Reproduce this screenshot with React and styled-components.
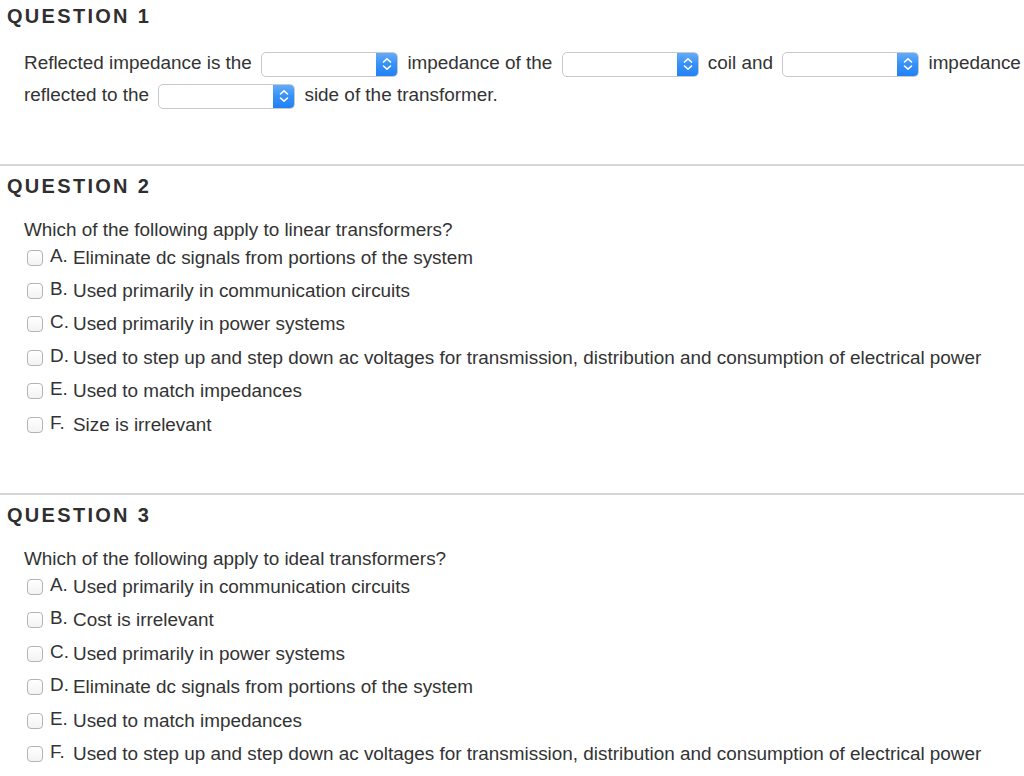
import React from "react";
import styled, { createGlobalStyle } from "styled-components";

const questions = [
  {
    id: 2,
    prompt: "Which of the following apply to linear transformers?",
    options: [
      "Eliminate dc signals from portions of the system",
      "Used primarily in communication circuits",
      "Used primarily in power systems",
      "Used to step up and step down ac voltages for transmission, distribution and consumption of electrical power",
      "Used to match impedances",
      "Size is irrelevant",
    ],
  },
  {
    id: 3,
    prompt: "Which of the following apply to ideal transformers?",
    options: [
      "Used primarily in communication circuits",
      "Cost is irrelevant",
      "Used primarily in power systems",
      "Eliminate dc signals from portions of the system",
      "Used to match impedances",
      "Used to step up and step down ac voltages for transmission, distribution and consumption of electrical power",
    ],
  },
];

const Dropdown = () => (
  <SelectBox>
    <SelectField />
    <SelectArrow>
      <svg width="10" height="14" viewBox="0 0 10 14">
        <path d="M1.5 5 L5 1.8 L8.5 5 M1.5 9 L5 12.2 L8.5 9" fill="none" stroke="#fff" strokeWidth="1.6" strokeLinecap="round" strokeLinejoin="round" />
      </svg>
    </SelectArrow>
  </SelectBox>
);

const App = () => (
  <>
    <GlobalStyle />
    <Page>
      <Question>
        <Heading>QUESTION 1</Heading>
        <FillText>
          <span>Reflected impedance is the</span> <Dropdown /> <span>impedance of the</span> <Dropdown />{" "}
          <span>coil and</span> <Dropdown /> <span>impedance</span> <span>reflected to the</span> <Dropdown />{" "}
          <span>side of the transformer.</span>
        </FillText>
      </Question>

      {questions.map((q) => (
        <Question key={q.id}>
          <Heading $top>QUESTION {q.id}</Heading>
          <Prompt>{q.prompt}</Prompt>
          <Options>
            {q.options.map((text, i) => (
              <Option key={i}>
                <Checkbox />
                <Letter>{String.fromCharCode(65 + i)}.</Letter>
                <span>{text}</span>
              </Option>
            ))}
          </Options>
        </Question>
      ))}
    </Page>
  </>
);

export default App;

// ===== styles =====
const GlobalStyle = createGlobalStyle`
  html, body { margin: 0; padding: 0; background: #fff; }
  body {
    font-family: "Liberation Sans", Arial, Helvetica, sans-serif;
    color: #333;
    -webkit-font-smoothing: antialiased;
  }
`;

const Page = styled.div`
  width: 1024px;
  overflow: hidden;
`;

const Question = styled.section`
  padding: 4px 0 53px;
  border-bottom: 2px solid #d6d6d6;

  & + & { padding: 8px 0 52px; }
  &:last-child { border-bottom: none; }
`;

const Heading = styled.h2`
  margin: 0 0 19px 7px;
  font-size: 20px;
  line-height: 24px;
  font-weight: 700;
  letter-spacing: 2.3px;
  color: #2f2f2f;

  ${(p) => p.$top && "margin-bottom: 21px;"}
`;

const FillText = styled.div`
  padding-left: 24px;
  font-size: 18.9px;
  line-height: 32px;
`;

const SelectBox = styled.span`
  display: inline-flex;
  vertical-align: middle;
  width: 137px;
  height: 25px;
  margin: 0 4px;
  border: 1px solid #c9c9c9;
  border-radius: 5px;
  box-sizing: border-box;
  overflow: hidden;
  background: #fff;
`;

const SelectField = styled.span`
  flex: 1;
`;

const SelectArrow = styled.span`
  width: 22px;
  display: flex;
  align-items: center;
  justify-content: center;
  margin: -1px -1px -1px 0;
  border-radius: 0 5px 5px 0;
  background: linear-gradient(#68aefa, #3690f7 50%, #1f80f5);
`;

const Prompt = styled.div`
  padding-left: 24px;
  font-size: 18.9px;
  line-height: 22px;
`;

const Options = styled.div`
  padding-left: 27px;
`;

const Option = styled.div`
  display: flex;
  align-items: center;
  height: 33.4px;
  font-size: 18.9px;
  white-space: nowrap;
`;

const Checkbox = styled.span`
  width: 16px;
  height: 16px;
  box-sizing: border-box;
  border: 1px solid #b4b4b4;
  border-radius: 4px;
  background: linear-gradient(#fff, #f3f3f3);
  box-shadow: inset 0 1px 0 #fff;
  flex: none;
`;

const Letter = styled.span`
  width: 23px;
  margin-left: 7px;
  position: relative;
  top: -2px;
  flex: none;
`;
